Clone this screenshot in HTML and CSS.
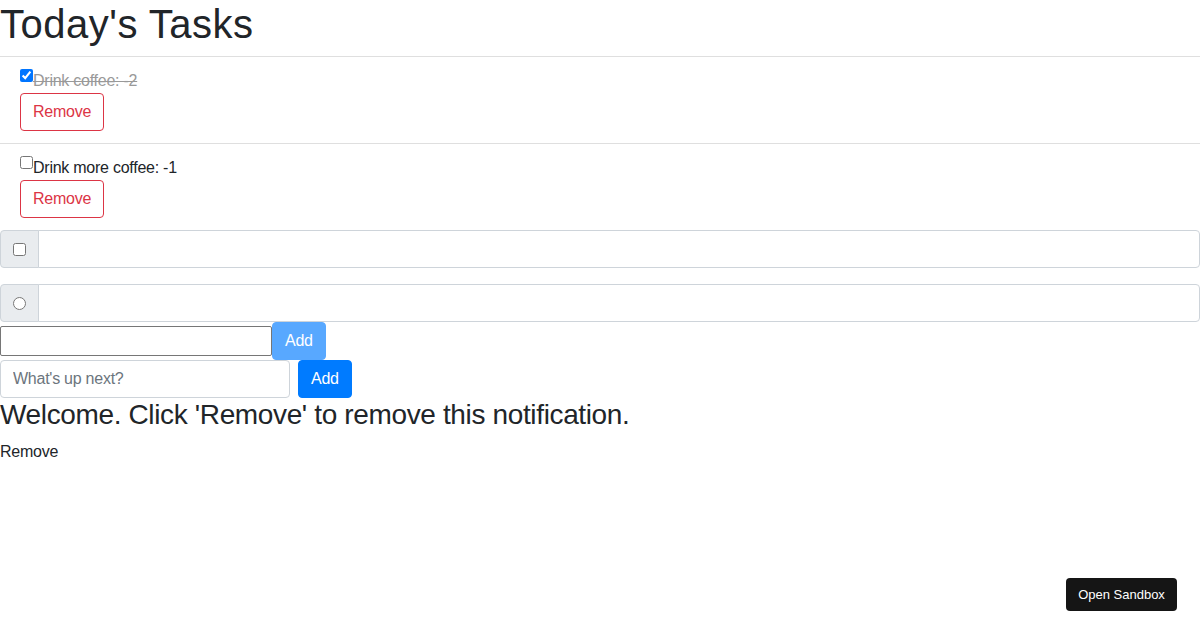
FILE: index.html
```html
<!DOCTYPE html>
<html lang="en">
  <head>
    <meta charset="UTF-8" />
    <meta name="viewport" content="width=device-width, initial-scale=1.0" />
    <title>Today's Tasks</title>
    <link rel="stylesheet" href="styles.css">
  </head>
  <body>
    <h1 class="title">Today's Tasks</h1>
    <ul class="task-list">
      <li class="task-item">
        <div class="task-line">
          <input type="checkbox" class="task-check" checked /><span class="task-text done">Drink coffee: -2</span>
        </div>
        <button class="btn btn-outline-danger">Remove</button>
      </li>
      <li class="task-item">
        <div class="task-line">
          <input type="checkbox" class="task-check" /><span class="task-text">Drink more coffee: -1</span>
        </div>
        <button class="btn btn-outline-danger">Remove</button>
      </li>
    </ul>

    <div class="input-group">
      <div class="addon"><input type="checkbox" /></div>
      <input type="text" class="form-control" />
    </div>
    <div class="input-group">
      <div class="addon"><input type="radio" /></div>
      <input type="text" class="form-control" />
    </div>

    <div class="plain-row"><input type="text" class="plain-input" /><button class="btn btn-primary" disabled>Add</button></div>

    <form class="add-form">
      <input type="text" class="form-control short" placeholder="What's up next?" />
      <button type="button" class="btn btn-primary">Add</button>
    </form>

    <h3 class="notice">Welcome. Click 'Remove' to remove this notification.</h3>
    <button class="link-btn">Remove</button>

    <button class="sandbox-btn">Open Sandbox</button>
  </body>
</html>
```

FILE: styles.css
```css
body {
  margin: 0;
  font-family: "Liberation Sans", Arial, sans-serif;
  font-size: 16px;
  line-height: 1.5;
  letter-spacing: -0.25px;
  color: #212529;
  background-color: #fff;
}
input,
button {
  margin: 0;
  font-family: inherit;
  font-size: inherit;
  line-height: inherit;
  letter-spacing: inherit;
}
.title {
  margin: 0 0 8px;
  font-size: 40px;
  font-weight: 400;
  line-height: 1.2;
  letter-spacing: 0.5px;
}
.task-list {
  list-style: none;
  margin: 0;
  padding: 0;
}
.task-item {
  padding: 12px 20px;
  border-top: 1px solid rgba(0, 0, 0, 0.125);
}
.task-line {
  height: 24px;
}
.task-check {
  margin: 0;
  width: 13px;
  height: 13px;
  vertical-align: top;
}
.task-text.done {
  color: #999;
  text-decoration: line-through;
}
.btn {
  display: inline-block;
  padding: 6px 12px;
  border: 1px solid transparent;
  border-radius: 4px;
  background: transparent;
  cursor: pointer;
}
.btn-outline-danger {
  color: #dc3545;
  border-color: #dc3545;
}
.btn-primary {
  color: #fff;
  background-color: #007bff;
  border-color: #007bff;
}
.btn-primary:disabled {
  opacity: 0.65;
  cursor: default;
}
.input-group {
  display: flex;
}
.input-group + .input-group {
  margin-top: 16px;
}
.addon {
  display: flex;
  align-items: center;
  justify-content: center;
  width: 39px;
  height: 38px;
  box-sizing: border-box;
  background-color: #e9ecef;
  border: 1px solid #ced4da;
  border-radius: 4px 0 0 4px;
}
.addon input {
  margin: 0;
  width: 13px;
  height: 13px;
}
.form-control {
  flex: 1;
  height: 38px;
  box-sizing: border-box;
  padding: 6px 12px;
  border: 1px solid #ced4da;
  border-radius: 4px;
  color: #495057;
}
.input-group .form-control {
  margin-left: -1px;
  border-radius: 0 4px 4px 0;
}
.form-control::placeholder {
  color: #6c757d;
}
.plain-row {
  height: 38px;
}
.plain-input {
  width: 272px;
  height: 30px;
  box-sizing: border-box;
  padding: 1px 2px;
  border: 1px solid #767676;
  border-radius: 2px;
  vertical-align: baseline;
}
.add-form {
  display: flex;
  gap: 8px;
  margin: 0;
}
.form-control.short {
  flex: none;
  width: 290px;
}
.notice {
  margin: 0 0 8px;
  font-size: 28px;
  font-weight: 400;
  line-height: 1.2;
  letter-spacing: -0.36px;
}
.link-btn {
  padding: 0;
  border: none;
  background: none;
  color: #212529;
  cursor: pointer;
}
.sandbox-btn {
  position: fixed;
  right: 23px;
  bottom: 19px;
  width: 111px;
  height: 33px;
  padding: 0;
  border: none;
  border-radius: 4px;
  background-color: #151515;
  color: #fff;
  font-size: 13px;
  line-height: 33px;
  letter-spacing: 0;
}
```
